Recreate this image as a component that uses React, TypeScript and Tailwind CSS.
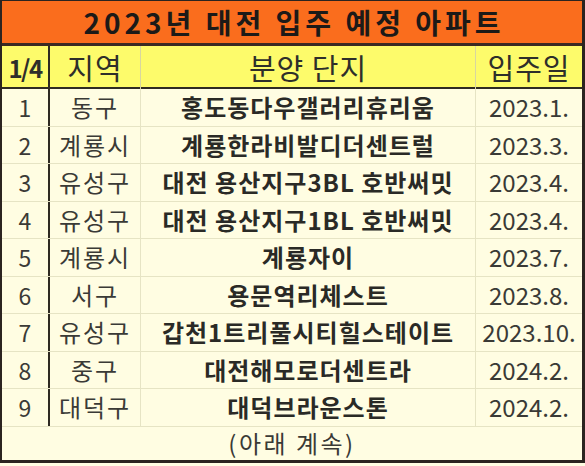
const font = { fontFamily: '"Noto Sans CJK KR", "Malgun Gothic", sans-serif' };

const rows = [
    { no: 1, area: "동구", name: "홍도동다우갤러리휴리움", date: "2023.1." },
    { no: 2, area: "계룡시", name: "계룡한라비발디더센트럴", date: "2023.3." },
    { no: 3, area: "유성구", name: "대전 용산지구3BL 호반써밋", date: "2023.4." },
    { no: 4, area: "유성구", name: "대전 용산지구1BL 호반써밋", date: "2023.4." },
    { no: 5, area: "계룡시", name: "계룡자이", date: "2023.7." },
    { no: 6, area: "서구", name: "용문역리체스트", date: "2023.8." },
    { no: 7, area: "유성구", name: "갑천1트리풀시티힐스테이트", date: "2023.10." },
    { no: 8, area: "중구", name: "대전해모로더센트라", date: "2024.2." },
    { no: 9, area: "대덕구", name: "대덕브라운스톤", date: "2024.2." },
];

export default function App() {
    return (
        <div className="w-[585px] h-[466px] bg-[#fffde2] overflow-hidden" style={font}>
            <div className="border-t border-l-2 border-r-[3px] border-b-[3px] border-[#2b2420]">
                <div className="h-[45px] bg-[#fa6d1d] border-b-[3px] border-[#3a2a22] flex items-center justify-center">
                    <span className="text-[28px] font-bold text-[#1c1a18] tracking-[4px] pl-[4px]">2023년 대전 입주 예정 아파트</span>
                </div>

                <div className="grid grid-cols-[48px_91px_335px_1fr] h-[43px] bg-[#fdfb6b] border-b-2 border-[#2e2a22] text-[#2e2e2a]">
                    <div className="flex items-center justify-center border-r-2 border-[#2e2a22] text-[24px] font-bold tracking-[-1.5px]">1/4</div>
                    <div className="flex items-center justify-center border-r border-[#d8d6a0] text-[29px] tracking-[1px]">지역</div>
                    <div className="flex items-center justify-center border-r border-[#d8d6a0] text-[29px] tracking-[1px]">분양 단지</div>
                    <div className="flex items-center justify-center text-[29px] tracking-[1px]">입주일</div>
                </div>

                {rows.map((r) => (
                    <div key={r.no} className="grid grid-cols-[48px_91px_335px_1fr] h-[37.5px] border-b border-[#e6e4c4] text-[#3a3a36]">
                        <div className="flex items-center justify-center border-r-2 border-[#2e2a22] text-[23px]">{r.no}</div>
                        <div className="flex items-center justify-center border-r border-[#e6e4c4] text-[24px] tracking-[2px]">{r.area}</div>
                        <div className="flex items-center justify-center border-r border-[#e6e4c4] text-[24px] font-bold tracking-[1px] text-[#2a2a26]">{r.name}</div>
                        <div className="flex items-center justify-center text-[24px]">{r.date}</div>
                    </div>
                ))}

                <div className="h-[33px] flex items-center justify-center text-[24px] tracking-[2.5px] text-[#3a3a36]">(아래 계속)</div>
            </div>
        </div>
    );
}
